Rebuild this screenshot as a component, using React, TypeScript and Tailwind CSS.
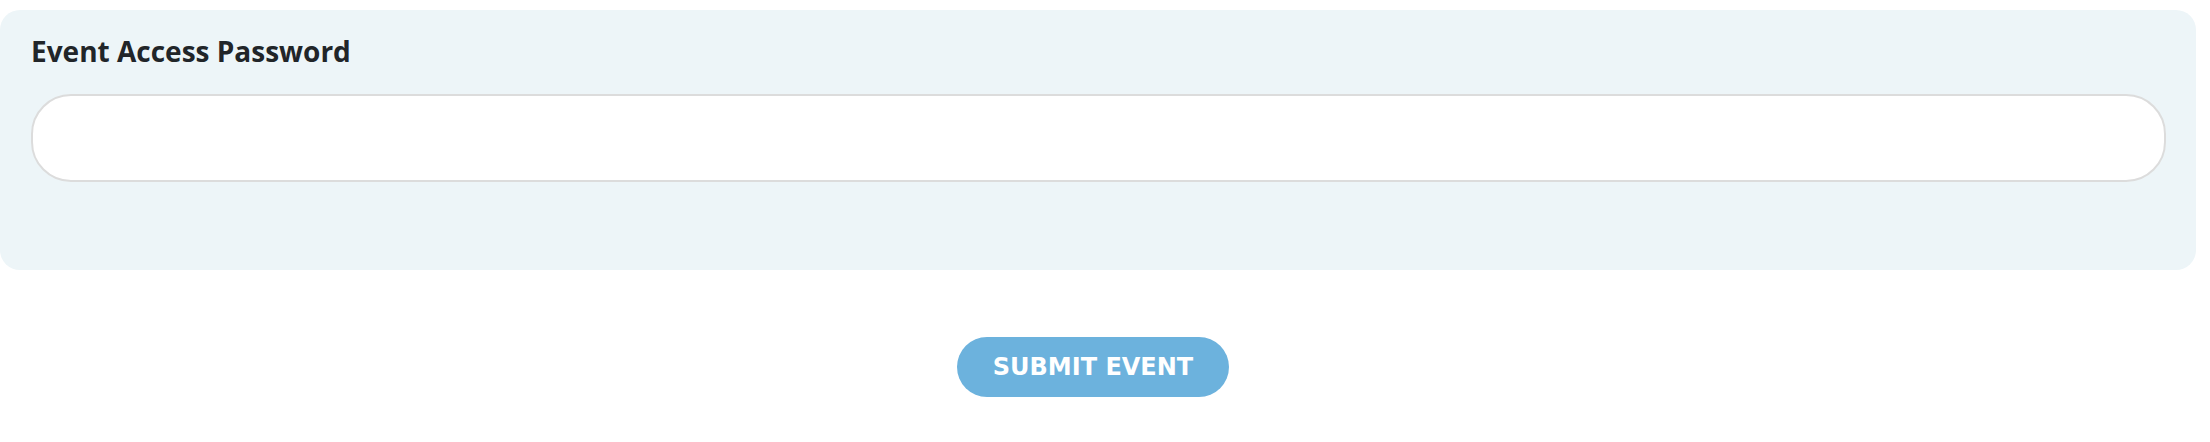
export default function App() {
  return (
    <div className="w-full bg-white pt-[10px] pr-[14px]" style={{ fontFamily: '"Open Sans", sans-serif' }}>
      <div className="rounded-[20px] bg-[#edf5f8] pl-[31px] pr-[30px] pt-[24px] pb-[88px]">
        <label className="block text-[28px] font-bold leading-[34px] text-[#212529]">Event Access Password</label>
        <input
          type="password"
          className="mt-[26px] block h-[88px] w-full rounded-[40px] border-2 border-[#dcdcdc] bg-white px-6 outline-none"
        />
      </div>
      <div className="flex justify-center pt-[67px] pr-[10px]">
        <button className="h-[60px] w-[272px] rounded-full bg-[#6cb2dd] font-['DejaVu_Sans',sans-serif] text-[24px] font-bold uppercase text-white">
          Submit Event
        </button>
      </div>
    </div>
  );
}
